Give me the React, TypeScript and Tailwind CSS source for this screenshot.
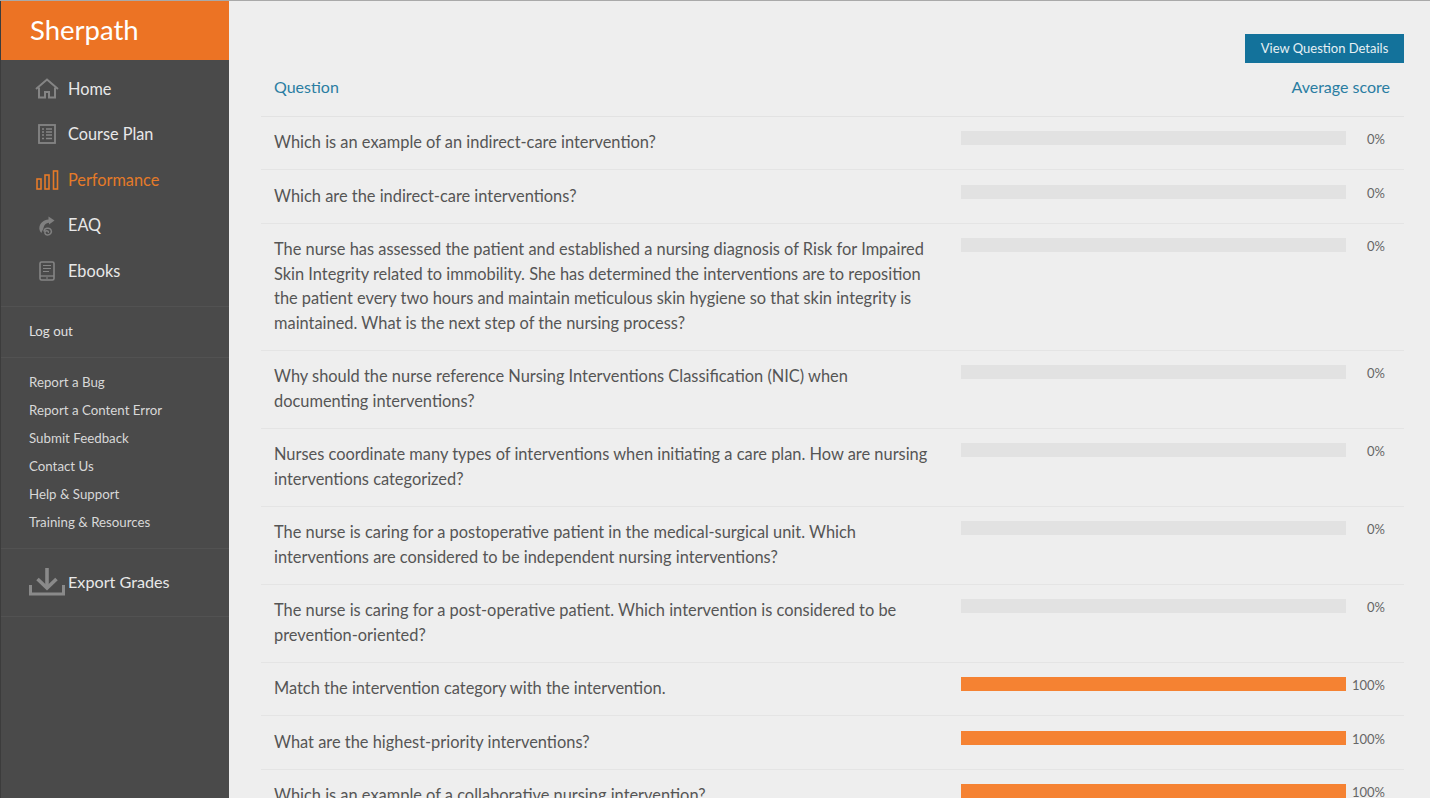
import { ReactNode } from "react";

const rows = [
  { text: "Which is an example of an indirect-care intervention?", score: 0 },
  { text: "Which are the indirect-care interventions?", score: 0 },
  {
    text: "The nurse has assessed the patient and established a nursing diagnosis of Risk for Impaired Skin Integrity related to immobility. She has determined the interventions are to reposition the patient every two hours and maintain meticulous skin hygiene so that skin integrity is maintained. What is the next step of the nursing process?",
    score: 0,
  },
  {
    text: "Why should the nurse reference Nursing Interventions Classification (NIC) when documenting interventions?",
    score: 0,
  },
  {
    text: "Nurses coordinate many types of interventions when initiating a care plan. How are nursing interventions categorized?",
    score: 0,
  },
  {
    text: "The nurse is caring for a postoperative patient in the medical-surgical unit. Which interventions are considered to be independent nursing interventions?",
    score: 0,
  },
  {
    text: "The nurse is caring for a post-operative patient. Which intervention is considered to be prevention-oriented?",
    score: 0,
  },
  { text: "Match the intervention category with the intervention.", score: 100 },
  { text: "What are the highest-priority interventions?", score: 100 },
  { text: "Which is an example of a collaborative nursing intervention?", score: 100 },
];

const HomeIcon = () => (
  <svg width="24" height="21" viewBox="0 0 24 21" fill="none" stroke="#858585" strokeWidth="2">
    <path d="M1 11 12 1.5 23 11" />
    <path d="M4 9.5V19.5H10V14H14V19.5H20V9.5" />
  </svg>
);

const PlanIcon = () => (
  <svg width="18" height="20" viewBox="0 0 18 20" fill="none" stroke="#858585">
    <rect x="1" y="1" width="16" height="18" strokeWidth="1.8" />
    <path d="M4 5H6M8 5H14M4 8H6M8 8H14M4 11H6M8 11H14M4 14.5H6M8 14.5H14" strokeWidth="1.3" />
  </svg>
);

const BarsIcon = () => (
  <svg width="23" height="20" viewBox="0 0 23 20" fill="none" stroke="#e57a28" strokeWidth="1.6">
    <rect x="1" y="9" width="4" height="10" />
    <rect x="9" y="5" width="4" height="14" />
    <rect x="17.5" y="1" width="4" height="18" />
  </svg>
);

const EaqIcon = () => (
  <svg width="16" height="20" viewBox="0 0 16 20" fill="none">
    <path
      d="M9.5 .5 15.5 4.5 10 8.5V6.8C7 7.2 5 9 4.6 11.5 4.2 13.5 3 15 2.4 17 .8 15.4 0 13.4.4 11 1 7 4.6 3.8 9.5 3.4Z"
      fill="#808080"
    />
    <path
      d="M5 15.5C5 12 10.5 11 12 13.8 13.4 16.6 11 19.2 8.2 19 5.6 18.6 5.2 16 6.8 15 8.4 14.2 10 15.4 9.2 16.8"
      stroke="#808080"
      strokeWidth="1.5"
    />
  </svg>
);

const BookIcon = () => (
  <svg width="16" height="20" viewBox="0 0 16 20" fill="none" stroke="#858585">
    <rect x="1" y="1" width="14" height="18" rx="1.5" strokeWidth="1.6" />
    <path d="M1 15H15" strokeWidth="1.3" />
    <path d="M4 4.5H12M4 7.5H12M4 10.5H10" strokeWidth="1.2" />
    <path d="M7 17H9" strokeWidth="1.2" />
  </svg>
);

const ExportIcon = () => (
  <svg className="mb-[2px]" width="36" height="29" viewBox="0 0 36 29" fill="none" stroke="#8a8a8a">
    <path d="M1.5 18V27H34.5V18" strokeWidth="3" />
    <path d="M18 1V20" strokeWidth="3.6" />
    <path d="M8.5 12 18 21 27.5 12" strokeWidth="3.6" />
  </svg>
);

function NavItem({ icon, label, active }: { icon: ReactNode; label: string; active?: boolean }) {
  return (
    <div className="flex h-[45.6px] items-center">
      <div className="flex w-[40px] shrink-0 justify-center pr-[2px]">{icon}</div>
      <span className={`text-[16.3px] ${active ? "text-[#e57a28]" : "text-[#e8e8e8]"}`}>{label}</span>
    </div>
  );
}

const helpLinks = [
  "Report a Bug",
  "Report a Content Error",
  "Submit Feedback",
  "Contact Us",
  "Help & Support",
  "Training & Resources",
];

function Sidebar() {
  return (
    <aside className="flex w-[229px] shrink-0 flex-col border-l border-[#3c3c3c] bg-[#4a4a4a]">
      <div className="h-[59px] bg-[#ec7324] pl-[29px] pt-[10px] text-[27.5px] leading-[38px] text-white">
        Sherpath
      </div>
      <nav className="border-b border-[#525252] pb-[12px] pl-[27px] pt-[6px]">
        <NavItem icon={<HomeIcon />} label="Home" />
        <NavItem icon={<PlanIcon />} label="Course Plan" />
        <NavItem icon={<BarsIcon />} label="Performance" active />
        <NavItem icon={<EaqIcon />} label="EAQ" />
        <NavItem icon={<BookIcon />} label="Ebooks" />
      </nav>
      <div className="flex h-[51px] items-center border-b border-[#525252] pl-[28px] text-[13.3px] text-[#e0e0e0]">
        Log out
      </div>
      <ul className="border-b border-[#525252] pb-[12px] pl-[28px] pt-[10px] text-[13.3px] leading-[28px] text-[#d8d8d8]">
        {helpLinks.map((link) => (
          <li key={link}>{link}</li>
        ))}
      </ul>
      <div className="flex h-[68px] items-center border-b border-[#525252] pl-[28px] text-[16.2px] text-[#e8e8e8]">
        <ExportIcon />
        <span className="ml-[3px]">Export Grades</span>
      </div>
    </aside>
  );
}

function ScoreRow({ text, score }: { text: string; score: number }) {
  return (
    <div className="flex border-b border-[#e4e4e4] pb-[14.5px] pl-[13px] pt-[13.5px]">
      <p className="w-[660px] text-[16.4px] leading-[24.5px] text-[#555555]">{text}</p>
      <div className="ml-[27px] mt-[1px] h-[14px] w-[385px] shrink-0 bg-[#e2e2e2]">
        <div className="h-full bg-[#f58232]" style={{ width: `${score}%` }} />
      </div>
      <span className="w-[39px] shrink-0 text-right text-[13px] leading-[18px] text-[#666666]">{score}%</span>
    </div>
  );
}

export default function App() {
  return (
    <div
      className="flex h-screen overflow-hidden border-t border-[#a9a9a9] bg-[#eeeeee]"
      style={{ fontFamily: "Lato, 'Noto Sans', sans-serif" }}
    >
      <Sidebar />
      <main className="min-w-0 flex-1 pl-[32px] pr-[26px] pt-[33px]">
        <div className="flex justify-end">
          <button className="h-[29px] w-[159px] bg-[#13729b] text-[13px] text-[#e6f0f4]">View Question Details</button>
        </div>
        <div className="flex justify-between border-b border-[#e2e2e2] px-[13px] pb-[16.5px] pt-[12px] text-[16px] leading-[24px] text-[#2a7da2]">
          <span>Question</span>
          <span className="pr-[1px]">Average score</span>
        </div>
        {rows.map((row) => (
          <ScoreRow key={row.text} text={row.text} score={row.score} />
        ))}
      </main>
    </div>
  );
}
